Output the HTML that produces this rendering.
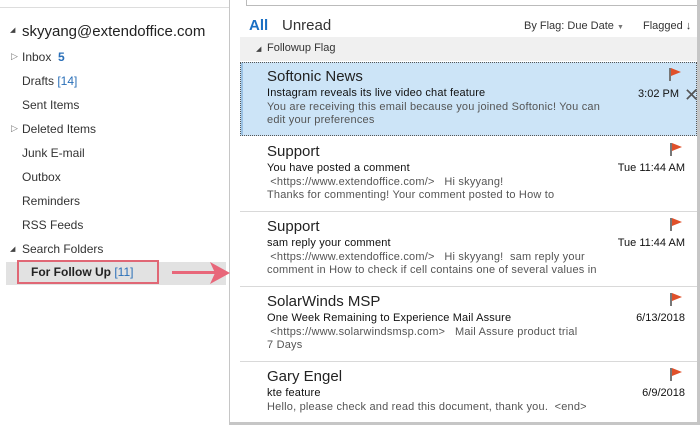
<!DOCTYPE html>
<html><head><style>
*{margin:0;padding:0;box-sizing:border-box}
body{width:700px;height:425px;overflow:hidden;background:#fff;font-family:"Liberation Sans",sans-serif;position:relative;color:#222}
.a{position:absolute;white-space:nowrap}
.left{position:absolute;left:0;top:0;width:230px;height:425px;background:#fff;border-right:1px solid #c6c6c6}
.f{position:absolute;left:22px;font-size:12px;color:#333}
.blue{color:#2a6fb8}
.item{position:absolute;left:240px;width:457px;height:75px;border-bottom:1px solid #d9d9d9}
.item .s{position:absolute;left:27px;top:6px;font-size:15px;color:#222}
.item .sub{position:absolute;left:27px;top:25px;font-size:11px;color:#111;letter-spacing:0.15px}
.item .p{position:absolute;left:27px;top:39px;font-size:11px;color:#555;line-height:13px;letter-spacing:0.2px;white-space:nowrap}
.item .d{position:absolute;right:12px;top:25px;font-size:11px;color:#111}
.flag{position:absolute;left:430px;top:6px;width:12px;height:13px}
</style></head><body>
<div class="left">
<div style="position:absolute;left:0;top:0;width:229px;height:8px;border-bottom:1px solid #ddd"></div>
<div class="a" style="left:10px;top:26px;font-size:7px;color:#444">◢</div>
<div class="a" style="left:22px;top:23px;font-size:15px;color:#222">skyyang@extendoffice.com</div>
<div class="a" style="left:11px;top:51px;font-size:9px;color:#777">▷</div>
<div class="f a" style="top:50px">Inbox &nbsp;<b class="blue">5</b></div>
<div class="f a" style="top:74px">Drafts <span class="blue">[14]</span></div>
<div class="f a" style="top:98px">Sent Items</div>
<div class="a" style="left:11px;top:123px;font-size:9px;color:#777">▷</div>
<div class="f a" style="top:122px">Deleted Items</div>
<div class="f a" style="top:146px">Junk E-mail</div>
<div class="f a" style="top:170px">Outbox</div>
<div class="f a" style="top:194px">Reminders</div>
<div class="f a" style="top:218px">RSS Feeds</div>
<div class="a" style="left:10px;top:245px;font-size:7px;color:#444">◢</div>
<div class="f a" style="top:242px">Search Folders</div>
<div style="position:absolute;left:6px;top:262px;width:220px;height:23px;background:#e2e2e2"></div>
<div style="position:absolute;left:17px;top:260px;width:142px;height:24px;border:2px solid #e06775"></div>
<div class="a" style="left:31px;top:265px;font-size:12px;color:#222"><b>For Follow Up</b> <span class="blue">[11]</span></div>
</div>
<div style="position:absolute;left:172px;top:271px;width:44px;height:3px;background:#e8677a"></div>
<svg style="position:absolute;left:210px;top:262px" width="20" height="22"><polygon points="0,0 20,11 0,22 5,11" fill="#e8677a"/></svg>
<div style="position:absolute;left:246px;top:0;width:452px;height:6px;border:1px solid #bbb;border-top:none"></div>
<div style="position:absolute;left:697px;top:0;width:3px;height:425px;background:#c6c6c6"></div>
<div class="a" style="left:249px;top:17px;font-size:15px;color:#1a6fc4;font-weight:bold">All</div>
<div class="a" style="left:282px;top:17px;font-size:15px;color:#333">Unread</div>
<div class="a" style="left:524px;top:20px;font-size:11px;color:#333">By Flag: Due Date <span style="font-size:7px;color:#777">▼</span></div>
<div class="a" style="left:643px;top:20px;font-size:11px;color:#333">Flagged ↓</div>
<div style="position:absolute;left:240px;top:37px;width:457px;height:24px;background:#f0f0f0"></div>
<div class="a" style="left:256px;top:45px;font-size:7px;color:#444">◢</div>
<div class="a" style="left:267px;top:42px;font-size:11px;color:#333">Followup Flag</div>
<div class="item" style="top:62px;background:#cce4f7;border:1px dotted #555;height:74px">
<div style="position:absolute;left:0;top:0;width:2px;height:72px;background:#9cc3e5"></div>
<div class="s" style="left:26px;top:5px">Softonic News</div>
<div class="sub" style="left:26px;top:24px">Instagram reveals its live video chat feature</div>
<div class="p" style="left:26px;top:38px">You are receiving this email because you joined Softonic! You can<br>edit your preferences</div>
<div class="d" style="right:17px;top:25px">3:02 PM</div>
<svg class="flag" style="left:428px;top:5px" width="13" height="14"><rect x="0" y="0" width="2" height="14" fill="#777"/><polygon points="2,0 12,4 2,8" fill="#e0502a"/></svg>
<div class="a" style="left:443px;top:22px;font-size:18px;color:#555">✕</div>
</div>
<div class="item" style="top:137px">
<div class="s">Support</div><div class="sub">You have posted a comment</div>
<div class="p">&nbsp;&lt;https://www.extendoffice.com/&gt; &nbsp;&nbsp;Hi skyyang!<br>Thanks for commenting! Your comment posted to How to</div>
<div class="d">Tue 11:44 AM</div>
<svg class="flag" width="13" height="14"><rect x="0" y="0" width="2" height="14" fill="#777"/><polygon points="2,0 12,4 2,8" fill="#e0502a"/></svg></div>
<div class="item" style="top:212px">
<div class="s">Support</div><div class="sub">sam reply your comment</div>
<div class="p">&nbsp;&lt;https://www.extendoffice.com/&gt; &nbsp;&nbsp;Hi skyyang! &nbsp;sam reply your<br>comment in How to check if cell contains one of several values in</div>
<div class="d">Tue 11:44 AM</div>
<svg class="flag" width="13" height="14"><rect x="0" y="0" width="2" height="14" fill="#777"/><polygon points="2,0 12,4 2,8" fill="#e0502a"/></svg></div>
<div class="item" style="top:287px">
<div class="s">SolarWinds MSP</div><div class="sub">One Week Remaining to Experience Mail Assure</div>
<div class="p">&nbsp;&lt;https://www.solarwindsmsp.com&gt; &nbsp;&nbsp;Mail Assure product trial<br>7 Days</div>
<div class="d">6/13/2018</div>
<svg class="flag" width="13" height="14"><rect x="0" y="0" width="2" height="14" fill="#777"/><polygon points="2,0 12,4 2,8" fill="#e0502a"/></svg></div>
<div class="item" style="top:362px;border-bottom:none">
<div class="s">Gary Engel</div><div class="sub">kte feature</div>
<div class="p">Hello, please check and read this document, thank you. &nbsp;&lt;end&gt;</div>
<div class="d">6/9/2018</div>
<svg class="flag" width="13" height="14"><rect x="0" y="0" width="2" height="14" fill="#777"/><polygon points="2,0 12,4 2,8" fill="#e0502a"/></svg></div>
<div style="position:absolute;left:230px;top:422px;width:470px;height:3px;background:#c6c6c6"></div>
</body></html>
